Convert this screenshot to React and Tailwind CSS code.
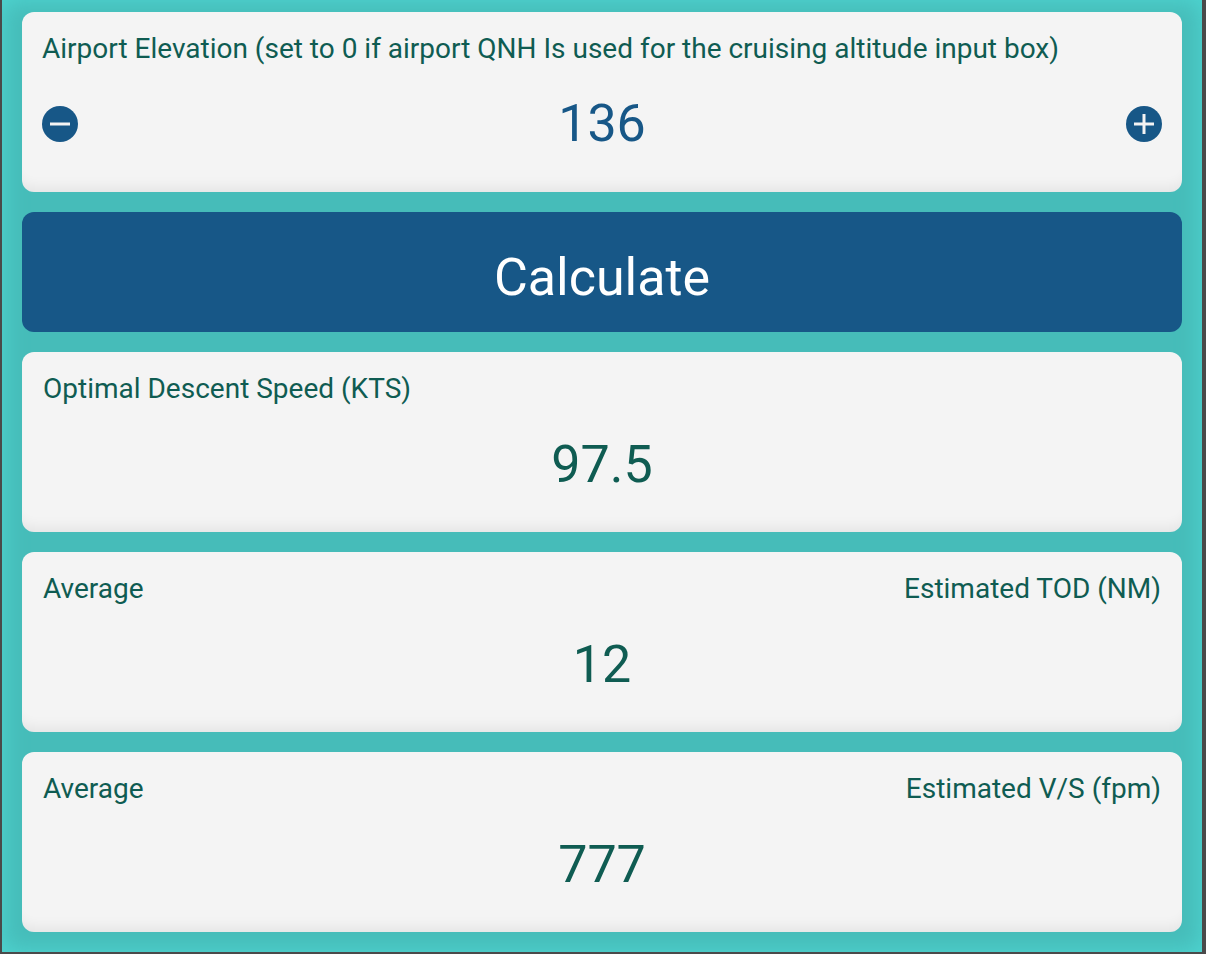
import React from 'react'

// minus / plus round buttons
function RoundIcon({ plus }) {
  return (
    <svg width="36" height="36" viewBox="0 0 36 36">
      <circle cx="18" cy="18" r="18" fill="#175787" />
      <rect x="8" y="16.5" width="20" height="3" fill="#f4f4f4" />
      {plus && <rect x="16.5" y="8" width="3" height="20" fill="#f4f4f4" />}
    </svg>
  )
}

function ResultCard({ left, right, value }) {
  return (
    <div className="h-[180px] rounded-xl bg-[#f4f4f4] shadow-[inset_0_-14px_14px_-10px_rgba(0,0,0,0.07)] px-[21px] pt-[21px] flex flex-col">
      <div className="flex justify-between text-[28px] leading-[32px] text-[#0f5c52]">
        <span>{left}</span>
        {right && <span>{right}</span>}
      </div>
      <div className="flex-1 flex items-center justify-center pb-[8px] text-[52px] text-[#0f5c52]">{value}</div>
    </div>
  )
}

export default function App() {
  return (
    <div className="w-[1206px] h-[954px] bg-[#4a4a4a] pl-[2px] pr-[4px] pb-[2px] font-['Roboto',sans-serif]">
      <div className="h-full bg-[#46bcb9] shadow-[inset_0_0_24px_#4fd8d4] px-[20px] pt-[12px] flex flex-col gap-[20px]">
        {/* elevation input */}
        <div className="h-[180px] rounded-xl bg-[#f4f4f4] shadow-[inset_0_-14px_14px_-10px_rgba(0,0,0,0.07)] px-[20px] pt-[21px] flex flex-col">
          <div className="text-[28px] leading-[32px] text-[#0f5c52] whitespace-nowrap">
            Airport Elevation (set to 0 if airport QNH Is used for the cruising altitude input box)
          </div>
          <div className="flex-1 flex items-center justify-between pb-[10px]">
            <RoundIcon />
            <span className="text-[52px] text-[#175787]">136</span>
            <RoundIcon plus />
          </div>
        </div>

        <button className="h-[120px] rounded-xl bg-[#175787] text-white text-[52px] pt-[12px]">Calculate</button>

        <ResultCard left="Optimal Descent Speed (KTS)" value="97.5" />
        <ResultCard left="Average" right="Estimated TOD (NM)" value="12" />
        <ResultCard left="Average" right="Estimated V/S (fpm)" value="777" />
      </div>
    </div>
  )
}
